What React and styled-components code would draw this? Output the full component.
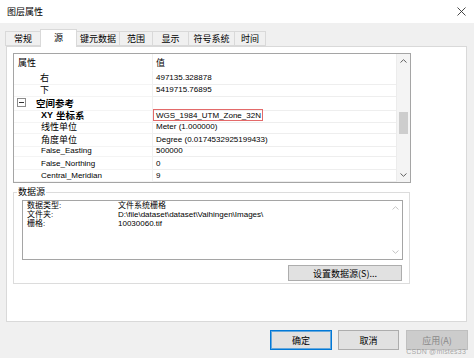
import React from "react";
import styled, { createGlobalStyle } from "styled-components";

const cjk = `"Noto Sans CJK SC", "Liberation Sans", sans-serif`;
const latin = `"Liberation Sans", "Noto Sans CJK SC", sans-serif`;

const GlobalStyle = createGlobalStyle`
  * {
    margin: 0;
    padding: 0;
    box-sizing: border-box;
  }
  body {
    background-color: #f0f0f0;
    font-family: ${latin};
    color: #000;
  }
`;

const Window = styled.div`
  position: relative;
  width: 474px;
  height: 358px;
  display: flex;
  flex-direction: column;
  background-color: #f0f0f0;
  overflow: hidden;
`;

const TitleBar = styled.div`
  height: 23px;
  flex: none;
  display: flex;
  align-items: center;
  justify-content: space-between;
  padding: 0 8px 0 7px;
  background-color: #fff;
  font-family: ${cjk};
  font-size: 9px;
`;

const TabStrip = styled.div`
  position: relative;
  z-index: 1;
  display: flex;
  align-items: flex-end;
  height: 17px;
  margin-top: 6px;
  padding-left: 6px;
`;

const Tab = styled.div`
  width: ${(p) => p.w}px;
  height: ${(p) => (p.active ? 18 : 15)}px;
  margin-bottom: ${(p) => (p.active ? -1 : 0)}px;
  margin-left: -1px;
  display: flex;
  align-items: center;
  justify-content: center;
  padding-bottom: ${(p) => (p.active ? 2 : 0)}px;
  background-color: ${(p) => (p.active ? "#fff" : "#f0f0f0")};
  border: 1px solid #d9d9d9;
  border-bottom: ${(p) => (p.active ? "none" : "1px solid #d9d9d9")};
  font-family: ${cjk};
  font-size: 9px;
`;

const Panel = styled.div`
  height: 276px;
  margin: 0 7px 0 6px;
  padding: 6px 0 0 6px;
  background-color: #fff;
  border: 1px solid #d9d9d9;
`;

const Grid = styled.div`
  width: 398px;
  height: 130px;
  display: flex;
  border: 1px solid #a5a5a5;
`;

const GridBody = styled.div`
  flex: 1;
  overflow: hidden;
`;

const Row = styled.div`
  display: grid;
  grid-template-columns: 139px 1fr;
  height: ${(p) => (p.head ? 17 : 12.35)}px;
  align-items: center;
`;

const Label = styled.div`
  height: 100%;
  display: flex;
  align-items: center;
  gap: 3px;
  padding-left: ${(p) => p.indent}px;
  font-family: ${cjk};
  font-size: ${(p) => (p.bold ? 9.5 : 9)}px;
  font-weight: ${(p) => (p.bold ? 700 : 400)};
  white-space: nowrap;
  border-right: 1px solid #f0f0f0;
  border-bottom: 1px solid ${(p) => (p.head ? "transparent" : "#f4f4f4")};
`;

const LatinLabel = styled.span`
  font-family: ${latin};
  font-size: ${(p) => (p.big ? 9 : 8)}px;
`;

const Value = styled.div`
  height: 100%;
  display: flex;
  align-items: center;
  padding-left: 3px;
  font-family: ${(p) => (p.head ? cjk : latin)};
  font-size: ${(p) => (p.head ? 9 : 8)}px;
  white-space: nowrap;
  border-bottom: 1px solid ${(p) => (p.head ? "transparent" : "#eeeeee")};
`;

const EditBox = styled.span`
  display: inline-flex;
  align-items: center;
  width: 110px;
  height: 12px;
  margin-left: -3px;
  padding-left: 2px;
  border: 1px solid #e36a6a;
`;

const ScrollBar = styled.div`
  width: 14px;
  flex: none;
  display: flex;
  flex-direction: column;
  background-color: ${(p) => (p.disabled ? "#fff" : "#f4f4f4")};
  border-left: 1px solid ${(p) => (p.disabled ? "#fff" : "#ececec")};
`;

const ArrowButton = styled.div`
  height: 14px;
  flex: none;
  display: flex;
  align-items: center;
  justify-content: center;
`;

const Track = styled.div`
  flex: 1;
  padding: 0 2px;
`;

const Thumb = styled.div`
  margin-top: ${(p) => p.offset}px;
  height: ${(p) => p.size}px;
  background-color: #cdcdcd;
`;

const Group = styled.fieldset`
  width: 397px;
  height: 97px;
  margin-top: 4px;
  padding: 0;
  border: 1px solid #dcdcdc;
`;

const GroupTitle = styled.legend`
  margin-left: 3px;
  padding: 0 1px;
  font-family: ${cjk};
  font-size: 9px;
  line-height: 10px;
`;

const GroupBody = styled.div`
  display: flex;
  flex-direction: column;
  align-items: flex-end;
  padding: 3px 6px 0 8px;
`;

const TextBox = styled.div`
  width: 100%;
  height: 60px;
  display: flex;
  border: 1px solid #a5a5a5;
`;

const TextLines = styled.div`
  flex: 1;
  padding: 0 0 0 4px;
`;

const DataRow = styled.div`
  display: grid;
  grid-template-columns: 91px 1fr;
  height: 9.2px;
  line-height: 9.2px;
  white-space: nowrap;
  font-family: ${latin};
  font-size: 8px;
`;

const Button = styled.button`
  width: ${(p) => p.w}px;
  height: ${(p) => p.h}px;
  display: flex;
  align-items: center;
  justify-content: center;
  font-family: ${cjk};
  font-size: 9px;
  color: ${(p) => (p.disabled ? "#8a8a8a" : "#000")};
  background-color: ${(p) => (p.disabled ? "#cccccc" : "#e1e1e1")};
  border: 1px solid
    ${(p) => (p.primary ? "#0078d7" : p.disabled ? "#bfbfbf" : "#adadad")};
  box-shadow: ${(p) =>
    p.primary ? "inset 0 0 0 1px rgba(0, 120, 215, 0.55)" : "none"};
`;

const SourceButton = styled(Button)`
  margin-top: 5px;
  margin-right: 1px;
`;

const Footer = styled.div`
  display: flex;
  justify-content: flex-end;
  gap: 6px;
  padding: 8px 6px 0 0;
`;

const Watermark = styled.div`
  position: absolute;
  right: 8px;
  bottom: 2px;
  font-family: ${latin};
  font-size: 7px;
  line-height: 8px;
  color: rgba(140, 140, 140, 0.75);
  letter-spacing: 0.2px;
`;

const CloseIcon = () => (
  <svg width="9" height="9" viewBox="0 0 9 9">
    <path d="M0.5 0.5 L8.5 8.5 M8.5 0.5 L0.5 8.5" stroke="#333" strokeWidth="0.9" />
  </svg>
);

const Chevron = ({ up, color }) => (
  <svg width="7" height="4" viewBox="0 0 7 4">
    <path
      d={up ? "M0.5 3.5 L3.5 0.7 L6.5 3.5" : "M0.5 0.5 L3.5 3.3 L6.5 0.5"}
      fill="none"
      stroke={color}
      strokeWidth="1"
    />
  </svg>
);

const Collapse = () => (
  <svg width="9" height="9" viewBox="0 0 9 9">
    <rect x="0.5" y="0.5" width="8" height="8" fill="#fff" stroke="#8c8c8c" />
    <path d="M2 4.5 H7" stroke="#333" strokeWidth="1" />
  </svg>
);

const tabs = [
  { name: "常规", w: 36 },
  { name: "源", w: 37, active: true },
  { name: "键元数据", w: 44 },
  { name: "范围", w: 34 },
  { name: "显示", w: 37 },
  { name: "符号系统", w: 47 },
  { name: "时间", w: 32 },
];

const sourceInfo = [
  ["数据类型:", "文件系统栅格"],
  ["文件夹:", "D:\\file\\dataset\\dataset\\Vaihingen\\Images\\"],
  ["栅格:", "10030060.tif"],
];

export default class App extends React.Component {
  render() {
    return (
      <Window>
        <GlobalStyle />
        <TitleBar>
          <span>图层属性</span>
          <CloseIcon />
        </TitleBar>
        <TabStrip>
          {tabs.map((t) => (
            <Tab key={t.name} w={t.w} active={t.active}>
              {t.name}
            </Tab>
          ))}
        </TabStrip>
        <Panel>
          <Grid>
            <GridBody>
              <Row head>
                <Label indent={4} head>属性</Label>
                <Value head>值</Value>
              </Row>
              <Row>
                <Label indent={26}>右</Label>
                <Value>497135.328878</Value>
              </Row>
              <Row>
                <Label indent={26}>下</Label>
                <Value>5419715.76895</Value>
              </Row>
              <Row>
                <Label indent={3} bold>
                  <Collapse />
                  <span style={{ marginLeft: 7 }}>空间参考</span>
                </Label>
                <Value />
              </Row>
              <Row>
                <Label indent={27} bold>
                  <LatinLabel big>XY</LatinLabel>坐标系
                </Label>
                <Value>
                  <EditBox>WGS_1984_UTM_Zone_32N</EditBox>
                </Value>
              </Row>
              <Row>
                <Label indent={27}>线性单位</Label>
                <Value>Meter (1.000000)</Value>
              </Row>
              <Row>
                <Label indent={27}>角度单位</Label>
                <Value>Degree (0.0174532925199433)</Value>
              </Row>
              <Row>
                <Label indent={27}>
                  <LatinLabel>False_Easting</LatinLabel>
                </Label>
                <Value>500000</Value>
              </Row>
              <Row>
                <Label indent={27}>
                  <LatinLabel>False_Northing</LatinLabel>
                </Label>
                <Value>0</Value>
              </Row>
              <Row>
                <Label indent={27}>
                  <LatinLabel>Central_Meridian</LatinLabel>
                </Label>
                <Value>9</Value>
              </Row>
            </GridBody>
            <ScrollBar>
              <ArrowButton>
                <Chevron up color="#606060" />
              </ArrowButton>
              <Track>
                <Thumb offset={44} size={22} />
              </Track>
              <ArrowButton>
                <Chevron color="#606060" />
              </ArrowButton>
            </ScrollBar>
          </Grid>

          <Group>
            <GroupTitle>数据源</GroupTitle>
            <GroupBody>
              <TextBox>
                <TextLines>
                  {sourceInfo.map(([k, v]) => (
                    <DataRow key={k}>
                      <span>{k}</span>
                      <span>{v}</span>
                    </DataRow>
                  ))}
                </TextLines>
                <ScrollBar disabled>
                  <ArrowButton>
                    <Chevron up color="#c4c4c4" />
                  </ArrowButton>
                  <Track />
                  <ArrowButton>
                    <Chevron color="#c4c4c4" />
                  </ArrowButton>
                </ScrollBar>
              </TextBox>
              <SourceButton w={114} h={16}>
                设置数据源(S)...
              </SourceButton>
            </GroupBody>
          </Group>
        </Panel>
        <Footer>
          <Button w={62} h={20} primary>
            确定
          </Button>
          <Button w={61} h={20} style={{ marginRight: 1 }}>
            取消
          </Button>
          <Button w={62} h={20} disabled>
            应用(A)
          </Button>
        </Footer>
        <Watermark>CSDN @mistes33</Watermark>
      </Window>
    );
  }
}
